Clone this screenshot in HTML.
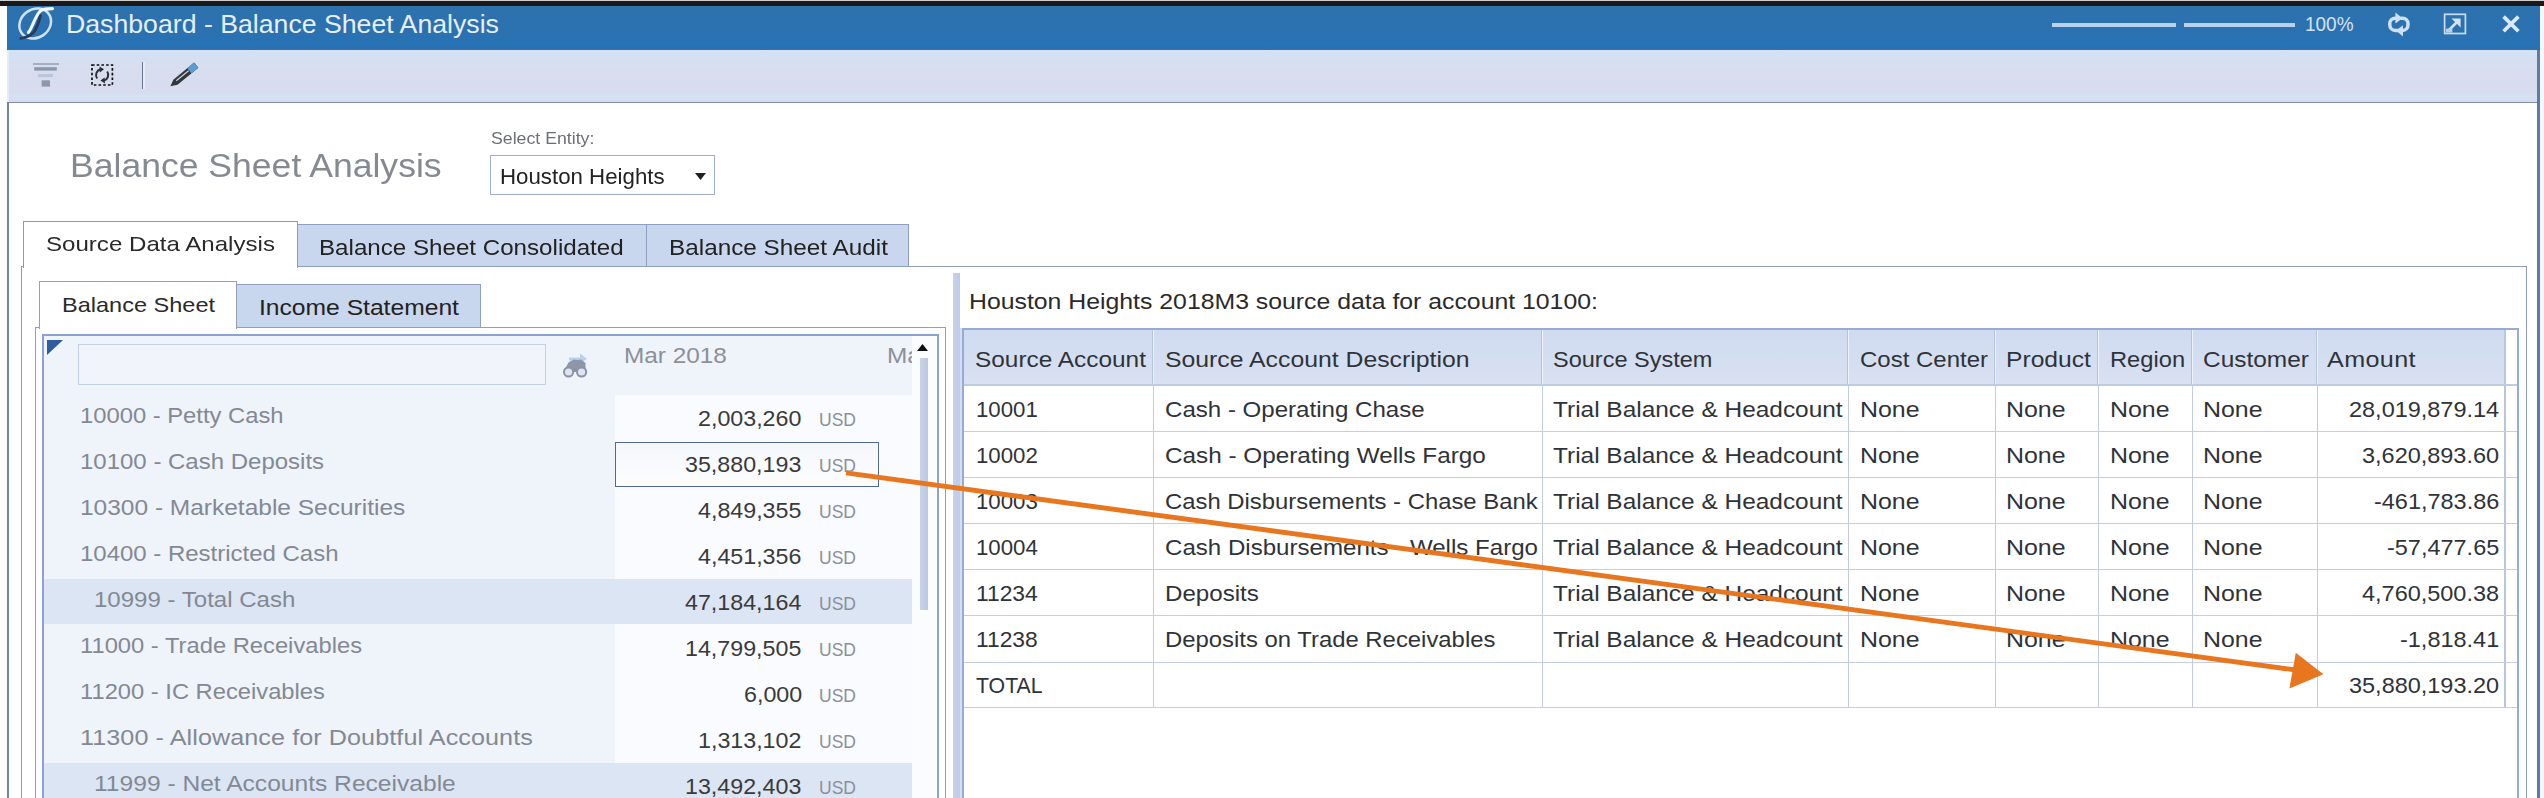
<!DOCTYPE html>
<html><head><meta charset="utf-8"><title>Dashboard - Balance Sheet Analysis</title>
<style>
html,body{margin:0;padding:0;background:#fff;}
body{width:2544px;height:798px;overflow:hidden;position:relative;font-family:"Liberation Sans",sans-serif;}
.t{position:absolute;white-space:nowrap;line-height:1;transform-origin:0 0;}
.r{position:absolute;box-sizing:border-box;}
svg{position:absolute;overflow:visible;}
#wrap{position:absolute;left:0;top:0;width:2544px;height:798px;filter:blur(0.5px);}
</style></head><body><div id="wrap">
<div class="r " style="left:0px;top:0px;width:2544px;height:5.6px;background:#1a1a1a;"></div>
<div class="r " style="left:0px;top:0px;width:2544px;height:0.9px;background:#cfcfcf;"></div>
<div class="r " style="left:7px;top:5.6px;width:2532.6px;height:44.1px;background:linear-gradient(#2d72ae 0%,#2b71b0 60%,#2673b6 90%,#2a70ae 95%,#3a6da3 100%);"></div>
<div class="r " style="left:7px;top:49.7px;width:2531px;height:52.3px;background:linear-gradient(#d2e2f6 0%,#d5e0f2 12%,#d7deef 35%,#d8dcee 80%,#d3e2f4 87%,#d4e0f2 92%,#d6dbee 100%);"></div>
<div class="r " style="left:7px;top:101.8px;width:2531px;height:1.2999999999999972px;background:#808cab;"></div>
<div class="r " style="left:7px;top:102px;width:1.5999999999999996px;height:696px;background:#74869f;"></div>
<div class="r " style="left:7px;top:49.7px;width:1.5px;height:52.3px;background:#e4ebf7;"></div>
<div class="r " style="left:2537px;top:49.7px;width:2.599999999999909px;height:748.3px;background:#617b9e;"></div>
<div class="r " style="left:2539.6px;top:5.8px;width:4.400000000000091px;height:792.2px;background:#f4f8fd;"></div>
<div class="t " style="left:65.50px;top:11.00px;font-size:26.6px;letter-spacing:0.000px;transform:scaleX(1.0029);color:#e6eff9;">Dashboard - Balance Sheet Analysis</div>
<div class="r " style="left:2052.4px;top:22.5px;width:124.0px;height:4.0px;background:#bad1eb;"></div>
<div class="r " style="left:2184.3px;top:22.5px;width:110.39999999999964px;height:4.0px;background:#bad1eb;"></div>
<div class="t " style="left:2305.00px;top:15.00px;font-size:19.5px;letter-spacing:0.000px;transform:scaleX(0.9729);color:#d3e2f3;">100%</div>
<div class="r " style="left:141.7px;top:62px;width:1.3000000000000114px;height:27px;background:#6a7690;"></div>
<div class="r " style="left:143px;top:62px;width:1.5px;height:27px;background:#e6ecf7;"></div>
<svg style="left:0;top:0" width="2544" height="110" viewBox="0 0 2544 110">
<!-- logo -->
<g fill="none" stroke-linecap="round">
<ellipse cx="0" cy="0" rx="16.6" ry="14.2" transform="translate(35.2 23.5) rotate(-35)" stroke="#cfe2f5" stroke-width="2.5"/>
<path d="M52.5 8.6C46 8.6 43 9 41 10.5C37.5 13 35.5 18 32.5 25C31 28.5 30 30.5 28.4 32.5" stroke="#f1f7fd" stroke-width="3.1"/>
<path d="M40.5 15.6C39.5 20 38 25 35 30.5C32.5 34.5 29 37 20.8 38.4" stroke="#2c3a59" stroke-width="2.9"/>
</g>
<!-- filter -->
<rect x="33" y="63.2" width="26" height="1.6" fill="#9aa3b6"/>
<rect x="34.2" y="67.2" width="22.6" height="3.4" fill="#8c97ad"/>
<rect x="38" y="74" width="15" height="3.2" fill="#bcc6da"/>
<rect x="41.6" y="80.3" width="8.4" height="6.3" fill="#8d98ae"/>
<!-- refresh selection -->
<rect x="92" y="65" width="20.4" height="20" fill="none" stroke="#111" stroke-width="1.7" stroke-dasharray="2.6 2.1"/>
<g fill="none" stroke="#2b2f38" stroke-width="2">
<path d="M97.2 78.5A6 6 0 0 1 100.5 69.2"/><path d="M107.2 71.5A6 6 0 0 1 104 80.6"/>
</g>
<path d="M99.5 66.6L104 69.3L99.8 72.4Z" fill="#2b2f38"/><path d="M105 83.4L100.4 80.6L104.6 77.5Z" fill="#2b2f38"/>
<!-- pencil -->
<g transform="translate(170.4 86.3) rotate(-39.3)">
<path d="M0 0L6.5 -3.3H33.4V3.3H6.5Z" fill="#33363d"/>
<path d="M8 -0.6H24" stroke="#c9ced9" stroke-width="1.3"/>
<rect x="24.5" y="-3.3" width="8.9" height="6.6" rx="1.2" fill="#5b9bd3"/>
</g>
<!-- refresh (title bar) -->
<g fill="none" stroke="#cde0f4" stroke-width="3.5">
<path d="M2396 18.2H2395.2A5.4 5.4 0 0 0 2389.8 23.6V25A5.4 5.4 0 0 0 2395.2 30.4H2398"/>
<path d="M2402 30.4H2402.6A5.4 5.4 0 0 0 2408 25V23.6A5.4 5.4 0 0 0 2402.6 18.2H2400.5"/>
</g>
<path d="M2395.4 12.6L2402.6 18.2L2395.4 23.4Z" fill="#cde0f4"/><path d="M2403 25.2L2395.8 30.6L2403 36.6Z" fill="#cde0f4"/>
<!-- restore -->
<rect x="2444.6" y="14.3" width="20.8" height="19.2" fill="none" stroke="#c9dcf1" stroke-width="1.7"/>
<path d="M2448.5 30.5L2458.5 20.5" stroke="#d3e3f4" stroke-width="2.6" fill="none"/>
<path d="M2451.5 18.6H2460.6V27.6Z" fill="#d3e3f4"/>
<rect x="2446" y="28.6" width="6.4" height="4" fill="#b9d0ea"/>
<!-- close -->
<path d="M2503.6 16.6L2518.4 31.2M2518.4 16.6L2503.6 31.2" stroke="#dbe8f6" stroke-width="3.7" fill="none"/>
</svg>
<div class="t " style="left:69.70px;top:149.00px;font-size:33px;letter-spacing:0.000px;transform:scaleX(1.0774);color:#858a92;">Balance Sheet Analysis</div>
<div class="t " style="left:490.60px;top:131.00px;font-size:16.6px;letter-spacing:0.000px;transform:scaleX(1.0670);color:#6c6f75;">Select Entity:</div>
<div class="r " style="left:490px;top:155px;width:225px;height:40px;border:1.6px solid #a0aecb;background:#fff;"></div>
<div class="t " style="left:500.00px;top:167.00px;font-size:21.4px;letter-spacing:-0.000px;transform:scaleX(1.0409);color:#222;">Houston Heights</div>
<svg style="left:695px;top:172.5px" width="11" height="7"><path d="M0 0H11L5.5 7Z" fill="#222"/></svg>
<div class="r " style="left:21px;top:266px;width:2506px;height:634px;border:1.5px solid #8e9ab0;background:#fff;"></div>
<div class="r " style="left:297px;top:224px;width:350px;height:43px;border:1.5px solid #8e9fc0;background:#c8d6ee;"></div>
<div class="r " style="left:646px;top:224px;width:263px;height:43px;border:1.5px solid #8e9fc0;background:#c8d6ee;"></div>
<div class="r " style="left:23px;top:220.5px;width:275px;height:47.10000000000002px;border:1.5px solid #8e9ab0;border-bottom:none;background:#fff;"></div>
<div class="t " style="left:46.20px;top:233.00px;font-size:21px;letter-spacing:0.000px;transform:scaleX(1.1469);color:#2a2a2a;">Source Data Analysis</div>
<div class="t " style="left:318.80px;top:237.00px;font-size:22px;letter-spacing:0.000px;transform:scaleX(1.0974);color:#222;">Balance Sheet Consolidated</div>
<div class="t " style="left:668.60px;top:237.00px;font-size:22px;letter-spacing:0.000px;transform:scaleX(1.1047);color:#222;">Balance Sheet Audit</div>
<div class="r " style="left:35px;top:327px;width:911px;height:573px;border:1.5px solid #93a0b8;background:#fff;"></div>
<div class="r " style="left:236px;top:284px;width:245px;height:44px;border:1.5px solid #8e9fc0;background:#c8d6ee;"></div>
<div class="r " style="left:38.5px;top:280.5px;width:198.5px;height:48.10000000000002px;border:1.5px solid #93a0b8;border-bottom:none;background:#fff;"></div>
<div class="t " style="left:61.50px;top:294.00px;font-size:21px;letter-spacing:0.000px;transform:scaleX(1.1201);color:#2a2a2a;">Balance Sheet</div>
<div class="t " style="left:259.20px;top:297.00px;font-size:22px;letter-spacing:0.000px;transform:scaleX(1.1199);color:#222;">Income Statement</div>
<div class="r " style="left:42px;top:334px;width:897px;height:566px;border:2px solid #8aa3d0;background:#eff3fa;"></div>
<div class="r " style="left:614.5px;top:395px;width:297.5px;height:505px;background:#f9fbfe;"></div>
<div class="r " style="left:912px;top:336px;width:25px;height:564px;background:#fbfcfe;"></div>
<div class="r " style="left:44px;top:579px;width:868px;height:44.5px;background:#dce5f4;"></div>
<div class="r " style="left:44px;top:762.5px;width:868px;height:37.5px;background:#dce5f4;"></div>
<svg style="left:47px;top:340px" width="16" height="15"><path d="M0 0H16L0 15Z" fill="#2e5c9e"/></svg>
<div class="r " style="left:78px;top:344px;width:468px;height:41px;border:1.5px solid #c3cfe6;background:#f1f4fb;"></div>
<div class="t " style="left:624.00px;top:346.00px;font-size:21.5px;letter-spacing:0.000px;transform:scaleX(1.1328);color:#8b9099;">Mar 2018</div>
<div class="r" style="left:886px;top:340px;width:25.5px;height:40px;overflow:hidden"><div class="t" style="left:0.6px;top:6px;font-size:21.5px;letter-spacing:0.000px;transform:scaleX(1.1328);color:#8b9099">Mar 2018</div></div>
<svg style="left:917px;top:344px" width="11" height="7"><path d="M0 7H11L5.5 0Z" fill="#111"/></svg>
<div class="r " style="left:919.5px;top:358px;width:8.0px;height:252px;background:linear-gradient(90deg,#c9d3e7,#bcc8df);"></div>
<div class="r " style="left:615px;top:441.5px;width:263.5px;height:45.30000000000001px;border:1.6px solid #4f6b93;background:linear-gradient(#f4f7fc,#fdfdfe);"></div>
<div class="t " style="left:79.70px;top:406.00px;font-size:21.5px;letter-spacing:0.000px;transform:scaleX(1.1060);color:#838993;">10000 - Petty Cash</div>
<div class="t " style="left:698.40px;top:408.00px;font-size:22.5px;letter-spacing:0.000px;transform:scaleX(1.0330);color:#3a3a3a;">2,003,260</div>
<div class="t " style="left:819.20px;top:411.00px;font-size:18.7px;letter-spacing:0.000px;transform:scaleX(0.9367);color:#8a9099;">USD</div>
<div class="t " style="left:79.70px;top:452.00px;font-size:21.5px;letter-spacing:0.000px;transform:scaleX(1.1159);color:#838993;">10100 - Cash Deposits</div>
<div class="t " style="left:685.49px;top:454.00px;font-size:22.5px;letter-spacing:0.000px;transform:scaleX(1.0330);color:#3a3a3a;">35,880,193</div>
<div class="t " style="left:819.20px;top:457.00px;font-size:18.7px;letter-spacing:0.000px;transform:scaleX(0.9367);color:#8a9099;">USD</div>
<div class="t " style="left:79.70px;top:498.00px;font-size:21.5px;letter-spacing:0.000px;transform:scaleX(1.1387);color:#838993;">10300 - Marketable Securities</div>
<div class="t " style="left:698.40px;top:500.00px;font-size:22.5px;letter-spacing:0.000px;transform:scaleX(1.0330);color:#3a3a3a;">4,849,355</div>
<div class="t " style="left:819.20px;top:503.00px;font-size:18.7px;letter-spacing:0.000px;transform:scaleX(0.9367);color:#8a9099;">USD</div>
<div class="t " style="left:79.60px;top:544.00px;font-size:21.5px;letter-spacing:-0.000px;transform:scaleX(1.1150);color:#838993;">10400 - Restricted Cash</div>
<div class="t " style="left:698.40px;top:546.00px;font-size:22.5px;letter-spacing:0.000px;transform:scaleX(1.0330);color:#3a3a3a;">4,451,356</div>
<div class="t " style="left:819.20px;top:549.00px;font-size:18.7px;letter-spacing:0.000px;transform:scaleX(0.9367);color:#8a9099;">USD</div>
<div class="t " style="left:94.30px;top:590.00px;font-size:21.5px;letter-spacing:0.000px;transform:scaleX(1.1183);color:#838993;">10999 - Total Cash</div>
<div class="t " style="left:685.49px;top:592.00px;font-size:22.5px;letter-spacing:0.000px;transform:scaleX(1.0330);color:#3a3a3a;">47,184,164</div>
<div class="t " style="left:819.20px;top:595.00px;font-size:18.7px;letter-spacing:0.000px;transform:scaleX(0.9367);color:#8a9099;">USD</div>
<div class="t " style="left:79.70px;top:636.00px;font-size:21.5px;letter-spacing:0.000px;transform:scaleX(1.1044);color:#838993;">11000 - Trade Receivables</div>
<div class="t " style="left:685.49px;top:638.00px;font-size:22.5px;letter-spacing:0.000px;transform:scaleX(1.0330);color:#3a3a3a;">14,799,505</div>
<div class="t " style="left:819.20px;top:641.00px;font-size:18.7px;letter-spacing:0.000px;transform:scaleX(0.9367);color:#8a9099;">USD</div>
<div class="t " style="left:79.70px;top:682.00px;font-size:21.5px;letter-spacing:0.000px;transform:scaleX(1.1036);color:#838993;">11200 - IC Receivables</div>
<div class="t " style="left:743.59px;top:684.00px;font-size:22.5px;letter-spacing:0.000px;transform:scaleX(1.0330);color:#3a3a3a;">6,000</div>
<div class="t " style="left:819.20px;top:687.00px;font-size:18.7px;letter-spacing:0.000px;transform:scaleX(0.9367);color:#8a9099;">USD</div>
<div class="t " style="left:79.70px;top:728.00px;font-size:21.5px;letter-spacing:0.068px;transform:scaleX(1.1700);color:#838993;">11300 - Allowance for Doubtful Accounts</div>
<div class="t " style="left:698.40px;top:730.00px;font-size:22.5px;letter-spacing:0.000px;transform:scaleX(1.0330);color:#3a3a3a;">1,313,102</div>
<div class="t " style="left:819.20px;top:733.00px;font-size:18.7px;letter-spacing:0.000px;transform:scaleX(0.9367);color:#8a9099;">USD</div>
<div class="t " style="left:94.30px;top:774.00px;font-size:21.5px;letter-spacing:0.000px;transform:scaleX(1.1437);color:#838993;">11999 - Net Accounts Receivable</div>
<div class="t " style="left:685.49px;top:776.00px;font-size:22.5px;letter-spacing:0.000px;transform:scaleX(1.0330);color:#3a3a3a;">13,492,403</div>
<div class="t " style="left:819.20px;top:779.00px;font-size:18.7px;letter-spacing:0.000px;transform:scaleX(0.9367);color:#8a9099;">USD</div>
<svg style="left:560px;top:348px" width="32" height="32" viewBox="560 348 32 32">
<path d="M569 357.5H580V353.5L587 358.7L580 364V360.5H569Z" fill="#b9d0ec"/>
<path d="M568.5 362.5L573.5 359.5L577.5 360L581 359.5L585.5 363V368H565.5Z" fill="#8e97a8"/>
<circle cx="568.6" cy="372" r="4.6" fill="#dfe5f0" stroke="#8a93a5" stroke-width="2"/>
<circle cx="581.6" cy="372" r="4.6" fill="#dfe5f0" stroke="#8a93a5" stroke-width="2"/>
<rect x="573" y="368" width="4.4" height="4" fill="#8a93a5"/>
</svg>
<div class="r " style="left:953.4px;top:273px;width:6.600000000000023px;height:627px;background:linear-gradient(90deg,#c6d2ea,#bccbe8);"></div>
<div class="r " style="left:960px;top:328px;width:2px;height:572px;background:#d3def2;"></div>
<div class="t " style="left:968.90px;top:291.00px;font-size:22px;letter-spacing:0.000px;transform:scaleX(1.1277);color:#2a2a2a;">Houston Heights 2018M3 source data for account 10100:</div>
<div class="r " style="left:962px;top:328px;width:1557px;height:572px;border:2px solid #98acd3;background:#fff;"></div>
<div class="r " style="left:964px;top:330px;width:1539.5px;height:54px;background:linear-gradient(#cfdbf0,#d9e1f2);"></div>
<div class="r " style="left:2503.5px;top:330px;width:2.0px;height:377px;background:#b9c6e0;"></div>
<div class="r " style="left:964px;top:383.5px;width:1553px;height:2.0px;background:#bccbe6;"></div>
<div class="r " style="left:964px;top:430.5px;width:1553px;height:1.0px;background:#c6cde0;"></div>
<div class="r " style="left:964px;top:477.0px;width:1553px;height:1.0px;background:#c6cde0;"></div>
<div class="r " style="left:964px;top:523.0px;width:1553px;height:1.0px;background:#c6cde0;"></div>
<div class="r " style="left:964px;top:569.0px;width:1553px;height:1.0px;background:#c6cde0;"></div>
<div class="r " style="left:964px;top:615.0px;width:1553px;height:1.0px;background:#c6cde0;"></div>
<div class="r " style="left:964px;top:661.5px;width:1553px;height:1.0px;background:#c6cde0;"></div>
<div class="r " style="left:964px;top:707.0px;width:1553px;height:1.0px;background:#c6cde0;"></div>
<div class="r " style="left:1152px;top:330px;width:2px;height:54px;background:#eef2fa;"></div>
<div class="r " style="left:1152.5px;top:384px;width:1.0px;height:323px;background:#c3cbe0;"></div>
<div class="r " style="left:1152px;top:330px;width:1px;height:54px;background:#b3c2de;"></div>
<div class="r " style="left:1541px;top:330px;width:2px;height:54px;background:#eef2fa;"></div>
<div class="r " style="left:1541.5px;top:384px;width:1.0px;height:323px;background:#c3cbe0;"></div>
<div class="r " style="left:1541px;top:330px;width:1px;height:54px;background:#b3c2de;"></div>
<div class="r " style="left:1847px;top:330px;width:2px;height:54px;background:#eef2fa;"></div>
<div class="r " style="left:1847.5px;top:384px;width:1.0px;height:323px;background:#c3cbe0;"></div>
<div class="r " style="left:1847px;top:330px;width:1px;height:54px;background:#b3c2de;"></div>
<div class="r " style="left:1994px;top:330px;width:2px;height:54px;background:#eef2fa;"></div>
<div class="r " style="left:1994.5px;top:384px;width:1.0px;height:323px;background:#c3cbe0;"></div>
<div class="r " style="left:1994px;top:330px;width:1px;height:54px;background:#b3c2de;"></div>
<div class="r " style="left:2097px;top:330px;width:2px;height:54px;background:#eef2fa;"></div>
<div class="r " style="left:2097.5px;top:384px;width:1.0px;height:323px;background:#c3cbe0;"></div>
<div class="r " style="left:2097px;top:330px;width:1px;height:54px;background:#b3c2de;"></div>
<div class="r " style="left:2191px;top:330px;width:2px;height:54px;background:#eef2fa;"></div>
<div class="r " style="left:2191.5px;top:384px;width:1.0px;height:323px;background:#c3cbe0;"></div>
<div class="r " style="left:2191px;top:330px;width:1px;height:54px;background:#b3c2de;"></div>
<div class="r " style="left:2316px;top:330px;width:2px;height:54px;background:#eef2fa;"></div>
<div class="r " style="left:2316.5px;top:384px;width:1.0px;height:323px;background:#c3cbe0;"></div>
<div class="r " style="left:2316px;top:330px;width:1px;height:54px;background:#b3c2de;"></div>
<div class="t " style="left:975.20px;top:350.00px;font-size:21.5px;letter-spacing:0.000px;transform:scaleX(1.1349);color:#2f3338;">Source Account</div>
<div class="t " style="left:1164.80px;top:350.00px;font-size:21.5px;letter-spacing:0.000px;transform:scaleX(1.1530);color:#2f3338;">Source Account Description</div>
<div class="t " style="left:1553.20px;top:350.00px;font-size:21.5px;letter-spacing:0.000px;transform:scaleX(1.0937);color:#2f3338;">Source System</div>
<div class="t " style="left:1859.50px;top:350.00px;font-size:21.5px;letter-spacing:-0.000px;transform:scaleX(1.1155);color:#2f3338;">Cost Center</div>
<div class="t " style="left:2006.00px;top:350.00px;font-size:21.5px;letter-spacing:0.000px;transform:scaleX(1.1459);color:#2f3338;">Product</div>
<div class="t " style="left:2109.80px;top:350.00px;font-size:21.5px;letter-spacing:0.000px;transform:scaleX(1.1018);color:#2f3338;">Region</div>
<div class="t " style="left:2203.00px;top:350.00px;font-size:21.5px;letter-spacing:-0.000px;transform:scaleX(1.1367);color:#2f3338;">Customer</div>
<div class="t " style="left:2327.20px;top:350.00px;font-size:21.5px;letter-spacing:0.328px;transform:scaleX(1.1700);color:#2f3338;">Amount</div>
<div class="t " style="left:976.20px;top:400.00px;font-size:21.5px;letter-spacing:-0.000px;transform:scaleX(1.0343);color:#2f3338;">10001</div>
<div class="t " style="left:1164.80px;top:400.00px;font-size:21.5px;letter-spacing:0.000px;transform:scaleX(1.1197);color:#2f3338;">Cash - Operating Chase</div>
<div class="t " style="left:1553.00px;top:400.00px;font-size:21.5px;letter-spacing:0.000px;transform:scaleX(1.1361);color:#2f3338;">Trial Balance &amp; Headcount</div>
<div class="t " style="left:1859.50px;top:400.00px;font-size:21.5px;letter-spacing:0.000px;transform:scaleX(1.1592);color:#2f3338;">None</div>
<div class="t " style="left:2006.00px;top:400.00px;font-size:21.5px;letter-spacing:-0.000px;transform:scaleX(1.1592);color:#2f3338;">None</div>
<div class="t " style="left:2109.80px;top:400.00px;font-size:21.5px;letter-spacing:-0.000px;transform:scaleX(1.1592);color:#2f3338;">None</div>
<div class="t " style="left:2203.00px;top:400.00px;font-size:21.5px;letter-spacing:-0.000px;transform:scaleX(1.1592);color:#2f3338;">None</div>
<div class="t " style="left:2349.02px;top:399.00px;font-size:22px;letter-spacing:0.000px;transform:scaleX(1.0670);color:#2f3338;">28,019,879.14</div>
<div class="t " style="left:976.20px;top:446.00px;font-size:21.5px;letter-spacing:-0.000px;transform:scaleX(1.0343);color:#2f3338;">10002</div>
<div class="t " style="left:1164.80px;top:446.00px;font-size:21.5px;letter-spacing:0.000px;transform:scaleX(1.1296);color:#2f3338;">Cash - Operating Wells Fargo</div>
<div class="t " style="left:1553.00px;top:446.00px;font-size:21.5px;letter-spacing:0.000px;transform:scaleX(1.1361);color:#2f3338;">Trial Balance &amp; Headcount</div>
<div class="t " style="left:1859.50px;top:446.00px;font-size:21.5px;letter-spacing:0.000px;transform:scaleX(1.1592);color:#2f3338;">None</div>
<div class="t " style="left:2006.00px;top:446.00px;font-size:21.5px;letter-spacing:-0.000px;transform:scaleX(1.1592);color:#2f3338;">None</div>
<div class="t " style="left:2109.80px;top:446.00px;font-size:21.5px;letter-spacing:-0.000px;transform:scaleX(1.1592);color:#2f3338;">None</div>
<div class="t " style="left:2203.00px;top:446.00px;font-size:21.5px;letter-spacing:-0.000px;transform:scaleX(1.1592);color:#2f3338;">None</div>
<div class="t " style="left:2362.09px;top:445.00px;font-size:22px;letter-spacing:0.000px;transform:scaleX(1.0670);color:#2f3338;">3,620,893.60</div>
<div class="t " style="left:976.20px;top:492.00px;font-size:21.5px;letter-spacing:-0.000px;transform:scaleX(1.0343);color:#2f3338;">10003</div>
<div class="t " style="left:1164.80px;top:492.00px;font-size:21.5px;letter-spacing:0.000px;transform:scaleX(1.1098);color:#2f3338;">Cash Disbursements - Chase Bank</div>
<div class="t " style="left:1553.00px;top:492.00px;font-size:21.5px;letter-spacing:0.000px;transform:scaleX(1.1361);color:#2f3338;">Trial Balance &amp; Headcount</div>
<div class="t " style="left:1859.50px;top:492.00px;font-size:21.5px;letter-spacing:0.000px;transform:scaleX(1.1592);color:#2f3338;">None</div>
<div class="t " style="left:2006.00px;top:492.00px;font-size:21.5px;letter-spacing:-0.000px;transform:scaleX(1.1592);color:#2f3338;">None</div>
<div class="t " style="left:2109.80px;top:492.00px;font-size:21.5px;letter-spacing:-0.000px;transform:scaleX(1.1592);color:#2f3338;">None</div>
<div class="t " style="left:2203.00px;top:492.00px;font-size:21.5px;letter-spacing:-0.000px;transform:scaleX(1.1592);color:#2f3338;">None</div>
<div class="t " style="left:2373.83px;top:491.00px;font-size:22px;letter-spacing:0.000px;transform:scaleX(1.0670);color:#2f3338;">-461,783.86</div>
<div class="t " style="left:976.20px;top:538.00px;font-size:21.5px;letter-spacing:-0.000px;transform:scaleX(1.0343);color:#2f3338;">10004</div>
<div class="t " style="left:1164.80px;top:538.00px;font-size:21.5px;letter-spacing:0.000px;transform:scaleX(1.1201);color:#2f3338;">Cash Disbursements - Wells Fargo</div>
<div class="t " style="left:1553.00px;top:538.00px;font-size:21.5px;letter-spacing:0.000px;transform:scaleX(1.1361);color:#2f3338;">Trial Balance &amp; Headcount</div>
<div class="t " style="left:1859.50px;top:538.00px;font-size:21.5px;letter-spacing:0.000px;transform:scaleX(1.1592);color:#2f3338;">None</div>
<div class="t " style="left:2006.00px;top:538.00px;font-size:21.5px;letter-spacing:-0.000px;transform:scaleX(1.1592);color:#2f3338;">None</div>
<div class="t " style="left:2109.80px;top:538.00px;font-size:21.5px;letter-spacing:-0.000px;transform:scaleX(1.1592);color:#2f3338;">None</div>
<div class="t " style="left:2203.00px;top:538.00px;font-size:21.5px;letter-spacing:-0.000px;transform:scaleX(1.1592);color:#2f3338;">None</div>
<div class="t " style="left:2386.90px;top:537.00px;font-size:22px;letter-spacing:0.000px;transform:scaleX(1.0670);color:#2f3338;">-57,477.65</div>
<div class="t " style="left:976.20px;top:584.00px;font-size:21.5px;letter-spacing:0.000px;transform:scaleX(1.0609);color:#2f3338;">11234</div>
<div class="t " style="left:1164.80px;top:584.00px;font-size:21.5px;letter-spacing:0.000px;transform:scaleX(1.1224);color:#2f3338;">Deposits</div>
<div class="t " style="left:1553.00px;top:584.00px;font-size:21.5px;letter-spacing:0.000px;transform:scaleX(1.1361);color:#2f3338;">Trial Balance &amp; Headcount</div>
<div class="t " style="left:1859.50px;top:584.00px;font-size:21.5px;letter-spacing:0.000px;transform:scaleX(1.1592);color:#2f3338;">None</div>
<div class="t " style="left:2006.00px;top:584.00px;font-size:21.5px;letter-spacing:-0.000px;transform:scaleX(1.1592);color:#2f3338;">None</div>
<div class="t " style="left:2109.80px;top:584.00px;font-size:21.5px;letter-spacing:-0.000px;transform:scaleX(1.1592);color:#2f3338;">None</div>
<div class="t " style="left:2203.00px;top:584.00px;font-size:21.5px;letter-spacing:-0.000px;transform:scaleX(1.1592);color:#2f3338;">None</div>
<div class="t " style="left:2362.09px;top:583.00px;font-size:22px;letter-spacing:0.000px;transform:scaleX(1.0670);color:#2f3338;">4,760,500.38</div>
<div class="t " style="left:976.20px;top:630.00px;font-size:21.5px;letter-spacing:0.000px;transform:scaleX(1.0609);color:#2f3338;">11238</div>
<div class="t " style="left:1164.80px;top:630.00px;font-size:21.5px;letter-spacing:0.000px;transform:scaleX(1.1103);color:#2f3338;">Deposits on Trade Receivables</div>
<div class="t " style="left:1553.00px;top:630.00px;font-size:21.5px;letter-spacing:0.000px;transform:scaleX(1.1361);color:#2f3338;">Trial Balance &amp; Headcount</div>
<div class="t " style="left:1859.50px;top:630.00px;font-size:21.5px;letter-spacing:0.000px;transform:scaleX(1.1592);color:#2f3338;">None</div>
<div class="t " style="left:2006.00px;top:630.00px;font-size:21.5px;letter-spacing:-0.000px;transform:scaleX(1.1592);color:#2f3338;">None</div>
<div class="t " style="left:2109.80px;top:630.00px;font-size:21.5px;letter-spacing:-0.000px;transform:scaleX(1.1592);color:#2f3338;">None</div>
<div class="t " style="left:2203.00px;top:630.00px;font-size:21.5px;letter-spacing:-0.000px;transform:scaleX(1.1592);color:#2f3338;">None</div>
<div class="t " style="left:2399.97px;top:629.00px;font-size:22px;letter-spacing:0.000px;transform:scaleX(1.0670);color:#2f3338;">-1,818.41</div>
<div class="t " style="left:975.50px;top:676.00px;font-size:21.5px;letter-spacing:0.000px;transform:scaleX(0.9888);color:#2f3338;">TOTAL</div>
<div class="t " style="left:2349.02px;top:675.00px;font-size:22px;letter-spacing:0.000px;transform:scaleX(1.0670);color:#2f3338;">35,880,193.20</div>
<svg style="left:0;top:0" width="2544" height="798"><line x1="846" y1="472.9" x2="2296" y2="670" stroke="#e8761f" stroke-width="4.9"/><path d="M2323.4 674.2L2295.8 652.8L2289.4 688.4Z" fill="#e8761f"/></svg>
</div></body></html>
